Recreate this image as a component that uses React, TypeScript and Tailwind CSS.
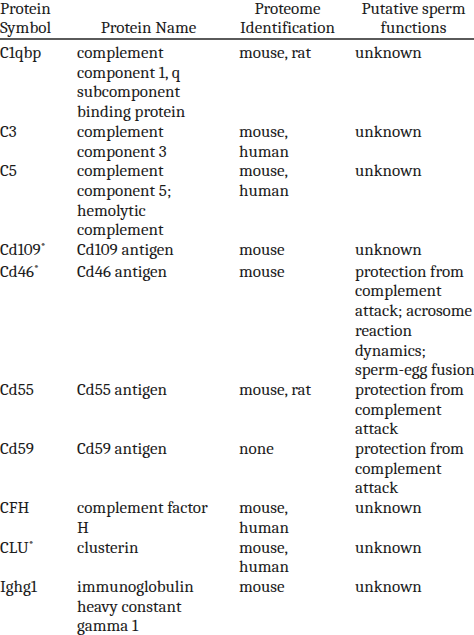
import React from "react";

type Row = {
  symbol: string;
  star?: boolean;
  name: string[];
  proteome: string[];
  functions: string[];
};

const rows: Row[] = [
  {
    symbol: "C1qbp",
    name: ["complement", "component 1, q", "subcomponent", "binding protein"],
    proteome: ["mouse, rat"],
    functions: ["unknown"],
  },
  {
    symbol: "C3",
    name: ["complement", "component 3"],
    proteome: ["mouse,", "human"],
    functions: ["unknown"],
  },
  {
    symbol: "C5",
    name: ["complement", "component 5;", "hemolytic", "complement"],
    proteome: ["mouse,", "human"],
    functions: ["unknown"],
  },
  {
    symbol: "Cd109",
    star: true,
    name: ["Cd109 antigen"],
    proteome: ["mouse"],
    functions: ["unknown"],
  },
  {
    symbol: "Cd46",
    star: true,
    name: ["Cd46 antigen"],
    proteome: ["mouse"],
    functions: [
      "protection from",
      "complement",
      "attack; acrosome",
      "reaction",
      "dynamics;",
      "sperm-egg fusion",
    ],
  },
  {
    symbol: "Cd55",
    name: ["Cd55 antigen"],
    proteome: ["mouse, rat"],
    functions: ["protection from", "complement", "attack"],
  },
  {
    symbol: "Cd59",
    name: ["Cd59 antigen"],
    proteome: ["none"],
    functions: ["protection from", "complement", "attack"],
  },
  {
    symbol: "CFH",
    name: ["complement factor", "H"],
    proteome: ["mouse,", "human"],
    functions: ["unknown"],
  },
  {
    symbol: "CLU",
    star: true,
    name: ["clusterin"],
    proteome: ["mouse,", "human"],
    functions: ["unknown"],
  },
  {
    symbol: "Ighg1",
    name: ["immunoglobulin", "heavy constant", "gamma 1"],
    proteome: ["mouse"],
    functions: ["unknown"],
  },
];

function Lines({ lines }: { lines: string[] }) {
  return (
    <>
      {lines.map((l, i) => (
        <div key={i} className="whitespace-nowrap">
          {l}
        </div>
      ))}
    </>
  );
}

export default function App() {
  return (
    <div className="w-[474px] h-[635px] overflow-hidden bg-white text-[#1c1c1c] font-serif font-[family-name:'Liberation_Serif',serif] text-[17px] leading-[19.7px]">
      {/* header */}
      <div className="grid grid-cols-[77px_162px_116px_1fr] leading-[18.8px]">
        <div>
          <div>Protein</div>
          <div>Symbol</div>
        </div>
        <div className="flex flex-col justify-end pr-[19px] text-center">
          <div>Protein Name</div>
        </div>
        <div className="pr-[19px] text-center">
          <div>Proteome</div>
          <div>Identification</div>
        </div>
        <div className="pr-[2px] text-center whitespace-nowrap">
          <div>Putative sperm</div>
          <div>functions</div>
        </div>
      </div>

      <div className="h-[2px] bg-[#5a5a5a]" />

      {/* body */}
      <div className="mt-[3.4px] grid grid-cols-[77px_162px_116px_1fr]">
        {rows.map((r) => (
          <React.Fragment key={r.symbol}>
            <div className="whitespace-nowrap">
              {r.symbol}
              {r.star && <span className="relative -top-[5px] text-[11px]">*</span>}
            </div>
            <div>
              <Lines lines={r.name} />
            </div>
            <div>
              <Lines lines={r.proteome} />
            </div>
            <div className="overflow-hidden">
              <Lines lines={r.functions} />
            </div>
          </React.Fragment>
        ))}
      </div>
    </div>
  );
}
